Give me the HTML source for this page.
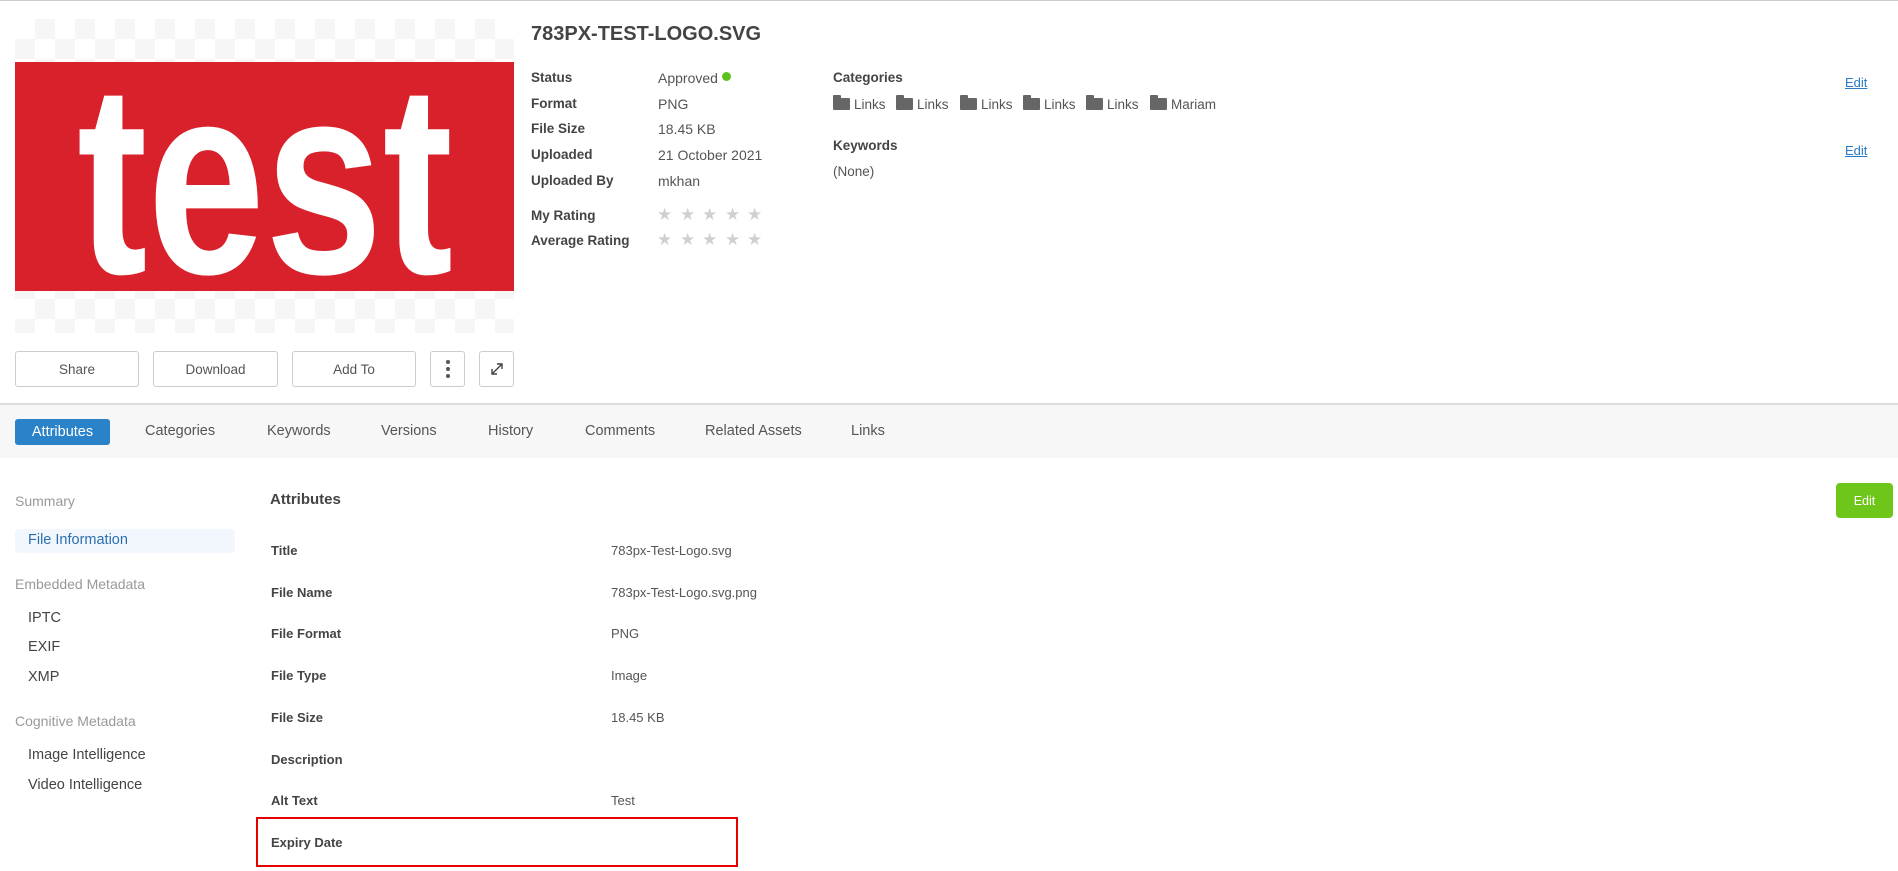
<!DOCTYPE html>
<html><head><meta charset="utf-8"><style>
*{margin:0;padding:0;box-sizing:border-box}
body{width:1898px;height:871px;position:relative;background:#fff;font-family:"Liberation Sans",sans-serif;color:#444;overflow:hidden;font-size:14px}
.a{position:absolute;white-space:nowrap}
.lb{color:#444;font-weight:bold;font-size:13.5px}
.v{color:#555;font-size:14px}
.btn{position:absolute;top:351px;height:36px;border:1px solid #ccc;border-radius:3px;background:#fff;color:#555;font-size:13.5px;display:flex;align-items:center;justify-content:center}
.star{position:absolute;color:#d0d0d0;font-size:17px}
.tab{position:absolute;top:423px;color:#555;font-size:14.5px}
.side{position:absolute;left:15px;color:#999;font-size:14px}
.si{position:absolute;left:28px;color:#444;font-size:14.5px}
.rl{position:absolute;left:271px;font-weight:bold;color:#444;font-size:13px}
.rv{position:absolute;left:611px;color:#555;font-size:13px}
.fold{display:inline-block;width:17px;height:12px;background:#666;border-radius:1px;position:relative;margin-right:4px;vertical-align:-1px}
.fold:before{content:"";position:absolute;left:0;top:-3px;width:8px;height:4px;background:#666;border-radius:1px 1px 0 0}
.edit{position:absolute;left:1845px;color:#2a7bc4;text-decoration:underline;font-size:13px}
</style></head><body>
<div class="a" style="left:0;top:0;width:1898px;height:1px;background:#ccc"></div>
<div class="a" style="left:15px;top:19px;width:499px;height:314px;background-color:#fff;background-image:linear-gradient(45deg,#f6f6f6 25%,transparent 25%,transparent 75%,#f6f6f6 75%),linear-gradient(45deg,#f6f6f6 25%,transparent 25%,transparent 75%,#f6f6f6 75%);background-size:40px 40px;background-position:0 0,20px 20px"></div>
<svg class="a" style="left:15px;top:62px" width="499" height="229"><rect width="499" height="229" fill="#d9212b"/><text x="62" y="211" font-family="Liberation Sans" font-weight="bold" font-size="272" fill="#fff" textLength="376" lengthAdjust="spacingAndGlyphs">test</text></svg>
<div class="a" style="left:531px;top:23px;font-size:20px;font-weight:bold;color:#444">783PX-TEST-LOGO.SVG</div>
<div class="a lb" style="left:531px;top:70px">Status</div><div class="a v" style="left:658px;top:70px">Approved <span style="display:inline-block;width:9px;height:9px;border-radius:50%;background:#5cc11e;vertical-align:2px"></span></div>
<div class="a lb" style="left:531px;top:96px">Format</div><div class="a v" style="left:658px;top:96px">PNG</div>
<div class="a lb" style="left:531px;top:121px">File Size</div><div class="a v" style="left:658px;top:121px">18.45 KB</div>
<div class="a lb" style="left:531px;top:147px">Uploaded</div><div class="a v" style="left:658px;top:147px">21 October 2021</div>
<div class="a lb" style="left:531px;top:173px">Uploaded By</div><div class="a v" style="left:658px;top:173px">mkhan</div>
<div class="a lb" style="left:531px;top:208px">My Rating</div>
<div class="a lb" style="left:531px;top:233px">Average Rating</div>
<div class="star" style="left:657px;top:205px">★</div><div class="star" style="left:680px;top:205px">★</div><div class="star" style="left:702px;top:205px">★</div><div class="star" style="left:725px;top:205px">★</div><div class="star" style="left:747px;top:205px">★</div>
<div class="star" style="left:657px;top:230px">★</div><div class="star" style="left:680px;top:230px">★</div><div class="star" style="left:702px;top:230px">★</div><div class="star" style="left:725px;top:230px">★</div><div class="star" style="left:747px;top:230px">★</div>
<div class="a lb" style="left:833px;top:70px">Categories</div>
<div class="a v" style="left:833px;top:97px;font-size:13.5px;word-spacing:0">
<span style="display:inline-block;width:63px"><i class="fold"></i>Links</span><span style="display:inline-block;width:64px"><i class="fold"></i>Links</span><span style="display:inline-block;width:63px"><i class="fold"></i>Links</span><span style="display:inline-block;width:63px"><i class="fold"></i>Links</span><span style="display:inline-block;width:64px"><i class="fold"></i>Links</span><span><i class="fold"></i>Mariam</span></div>
<div class="a lb" style="left:833px;top:138px">Keywords</div>
<div class="a v" style="left:833px;top:164px;font-size:13.5px">(None)</div>
<div class="edit" style="top:75px">Edit</div><div class="edit" style="top:143px">Edit</div>
<div class="btn" style="left:15px;width:124px">Share</div>
<div class="btn" style="left:153px;width:125px">Download</div>
<div class="btn" style="left:292px;width:124px">Add To</div>
<div class="btn" style="left:430px;width:35px"><svg width="6" height="20"><circle cx="3" cy="3" r="2" fill="#555"/><circle cx="3" cy="10" r="2" fill="#555"/><circle cx="3" cy="17" r="2" fill="#555"/></svg></div>
<div class="btn" style="left:479px;width:35px"><svg width="12" height="12" fill="none" stroke="#444" stroke-width="1.4"><path d="M1 11L11 1M6 1H11V6M1 6V11H6"/></svg></div>
<div class="a" style="left:0;top:403px;width:1898px;height:55px;background:#f7f7f7;border-top:2px solid #ddd"></div>
<div class="a" style="left:15px;top:419px;width:95px;height:26px;background:#2a82c9;border-radius:3px;color:#fff;font-size:14.5px;display:flex;align-items:center;justify-content:center">Attributes</div>
<div class="tab" style="left:145px">Categories</div><div class="tab" style="left:267px">Keywords</div><div class="tab" style="left:381px">Versions</div><div class="tab" style="left:488px">History</div><div class="tab" style="left:585px">Comments</div><div class="tab" style="left:705px">Related Assets</div><div class="tab" style="left:851px">Links</div>
<div class="side" style="top:493px">Summary</div>
<div class="a" style="left:15px;top:529px;width:220px;height:24px;background:#f2f7fd;border-radius:4px"></div>
<div class="si" style="top:532px;color:#2a6fb0">File Information</div>
<div class="side" style="top:576px">Embedded Metadata</div>
<div class="si" style="top:610px">IPTC</div><div class="si" style="top:639px">EXIF</div><div class="si" style="top:669px">XMP</div>
<div class="side" style="top:713px">Cognitive Metadata</div>
<div class="si" style="top:747px">Image Intelligence</div><div class="si" style="top:777px">Video Intelligence</div>
<div class="a" style="left:270px;top:491px;font-weight:bold;font-size:15px;color:#444">Attributes</div>
<div class="a" style="left:1836px;top:483px;width:57px;height:35px;background:#6fc61a;border-radius:4px;color:#fff;font-size:12.5px;display:flex;align-items:center;justify-content:center">Edit</div>
<div class="rl" style="top:543px">Title</div><div class="rv" style="top:543px">783px-Test-Logo.svg</div>
<div class="rl" style="top:585px">File Name</div><div class="rv" style="top:585px">783px-Test-Logo.svg.png</div>
<div class="rl" style="top:626px">File Format</div><div class="rv" style="top:626px">PNG</div>
<div class="rl" style="top:668px">File Type</div><div class="rv" style="top:668px">Image</div>
<div class="rl" style="top:710px">File Size</div><div class="rv" style="top:710px">18.45 KB</div>
<div class="rl" style="top:752px">Description</div>
<div class="rl" style="top:793px">Alt Text</div><div class="rv" style="top:793px">Test</div>
<div class="rl" style="top:835px">Expiry Date</div>
<div class="a" style="left:256px;top:817px;width:482px;height:50px;border:2px solid #e60000"></div>
</body></html>
